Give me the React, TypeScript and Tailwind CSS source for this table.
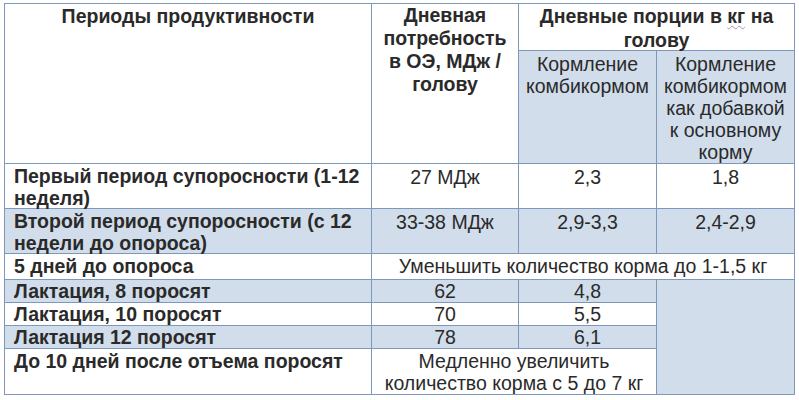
const shade = "bg-[#d1ddeb]";

export default function App() {
  return (
    <div className="h-[400px] w-[799px] bg-white pl-[4px] pt-[3px] font-['Liberation_Sans',Arial,sans-serif] text-[19.5px] leading-[22px] text-[#2a2a2a]">
      <div className="grid w-[791px] grid-cols-[366px_146px_137px_137px] grid-rows-[46px_112px_44px_44px_25px_22px_22px_22px_45px] gap-px bg-[#7d98bb] p-px">
        {/* header */}
        <div className="row-span-2 bg-white pt-[1px] text-center font-bold">Периоды продуктивности</div>
        <div className="row-span-2 bg-white text-center font-bold leading-[23px]">
          Дневная
          <br />
          потребность
          <br />
          в ОЭ, МДж /
          <br />
          голову
        </div>
        <div className="col-span-2 bg-white text-center font-bold leading-[24px]">
          Дневные порции в{" "}
          <span className="underline decoration-gray-400 decoration-wavy decoration-1 underline-offset-2">кг</span> на
          <br />
          голову
        </div>
        <div className={`${shade} pt-[2px] text-center`}>
          Кормление
          <br />
          комбикормом
        </div>
        <div className={`${shade} pt-[2px] text-center`}>
          Кормление
          <br />
          комбикормом
          <br />
          как добавкой
          <br />к основному
          <br />
          корму
        </div>

        {/* first period */}
        <div className="bg-white pl-[9px] pt-[1px] font-bold">
          Первый период супоросности (1-12
          <br />
          неделя)
        </div>
        <div className="bg-white pt-[2px] text-center">27 МДж</div>
        <div className="bg-white pt-[2px] text-center">2,3</div>
        <div className="bg-white pt-[2px] text-center">1,8</div>

        {/* second period */}
        <div className={`${shade} pl-[9px] pt-[1px] font-bold`}>
          Второй период супоросности (с 12
          <br />
          недели до опороса)
        </div>
        <div className={`${shade} pt-[2px] text-center`}>33-38 МДж</div>
        <div className={`${shade} pt-[2px] text-center`}>2,9-3,3</div>
        <div className={`${shade} pt-[2px] text-center`}>2,4-2,9</div>

        {/* 5 days */}
        <div className="bg-white pl-[9px] pt-[1px] font-bold">5 дней до опороса</div>
        <div className="col-span-3 bg-white pt-[1px] text-center">Уменьшить количество корма до 1-1,5 кг</div>

        {/* lactation */}
        <div className={`${shade} pl-[9px] font-bold`}>Лактация, 8 поросят</div>
        <div className={`${shade} text-center`}>62</div>
        <div className={`${shade} text-center`}>4,8</div>
        <div className={`${shade} row-span-4`} />

        <div className="bg-white pl-[9px] font-bold">Лактация, 10 поросят</div>
        <div className="bg-white text-center">70</div>
        <div className="bg-white text-center">5,5</div>

        <div className={`${shade} pl-[9px] font-bold`}>Лактация 12 поросят</div>
        <div className={`${shade} text-center`}>78</div>
        <div className={`${shade} text-center`}>6,1</div>

        {/* after weaning */}
        <div className="bg-white pl-[9px] pt-[1px] font-bold">До 10 дней после отъема поросят</div>
        <div className="col-span-2 bg-white pt-[1px] text-center">
          Медленно увеличить
          <br />
          количество корма с 5 до 7 кг
        </div>
      </div>
    </div>
  );
}
